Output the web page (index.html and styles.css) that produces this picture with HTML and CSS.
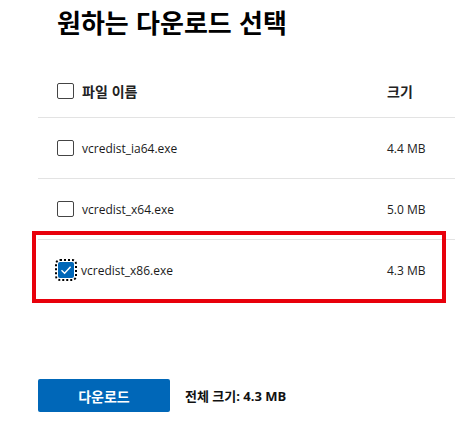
FILE: index.html
```html
<!DOCTYPE html>
<html lang="ko">
<head>
<meta charset="utf-8">
<link rel="stylesheet" href="styles.css">
</head>
<body>
<div class="page">
  <h1 class="title">원하는 다운로드 선택</h1>
  <div class="table">
    <div class="row head">
      <div class="name"><span class="box"></span><span class="label">파일 이름</span></div>
      <div class="size">크기</div>
    </div>
    <div class="row">
      <div class="name"><span class="box"></span><span class="label">vcredist_ia64.exe</span></div>
      <div class="size">4.4 MB</div>
    </div>
    <div class="row">
      <div class="name"><span class="box"></span><span class="label">vcredist_x64.exe</span></div>
      <div class="size">5.0 MB</div>
    </div>
    <div class="row selected">
      <div class="name"><span class="box checked"><svg viewBox="0 0 16 16" width="16" height="16"><path d="M3.5 8.2 L6.6 11.2 L12.6 4.8" fill="none" stroke="#fff" stroke-width="1.4"/></svg></span><span class="label tight">vcredist_x86.exe</span></div>
      <div class="size">4.3 MB</div>
      <div class="highlight"></div>
    </div>
  </div>
  <div class="footer">
    <button class="btn">다운로드</button>
    <span class="total">전체 크기: 4.3 MB</span>
  </div>
</div>
</body>
</html>
```
FILE: styles.css
```css
* { box-sizing: border-box; }
body {
  margin: 0;
  background: #fff;
  font-family: "Open Sans", "Noto Sans CJK KR", sans-serif;
  color: #1a1a1a;
}
.page {
  width: 474px;
  height: 443px;
  padding: 0 19px 0 38px;
}
.title {
  margin: 0;
  padding: 5px 0 0 19px;
  height: 65px;
  font-family: "Noto Sans CJK KR", sans-serif;
  font-size: 26px;
  font-weight: 700;
  line-height: 34px;
  color: #000;
}
.table {
  width: 417px;
}
.row {
  position: relative;
  display: flex;
  align-items: center;
  height: 61px;
  padding-left: 19px;
  border-top: 1px solid #e3e3e3;
  font-size: 12px;
}
.row.head {
  height: 52px;
  border-top: none;
  font-family: "Noto Sans CJK KR", sans-serif;
  font-weight: 700;
  font-size: 14px;
  color: #222;
}
.name {
  display: flex;
  align-items: center;
  width: 330px;
}
.box {
  width: 17px;
  height: 16px;
  border: 1.5px solid #444;
  border-radius: 2px;
  flex: none;
  display: block;
}
.box.checked {
  width: 16px;
  margin-left: 1px;
  background: #0067b8;
  border: none;
  outline: 2px dotted #000;
  outline-offset: 1px;
}
.box svg { display: block; }
.label { margin-left: 8px; }
.label.tight { margin-left: 7px; }
.size { color: #222; }
.highlight {
  position: absolute;
  left: -6px;
  top: -9px;
  width: 414px;
  height: 72px;
  border: 4px solid #e8000b;
}
.footer {
  display: flex;
  align-items: center;
  margin-top: 79px;
}
.btn {
  width: 132px;
  height: 33px;
  border: none;
  border-radius: 2px;
  background: #0067b8;
  color: #fff;
  font-family: "Noto Sans CJK KR", sans-serif;
  font-weight: 700;
  font-size: 14px;
}
.total {
  margin-left: 15px;
  font-family: "Open Sans", "Noto Sans CJK KR", sans-serif;
  font-weight: 700;
  font-size: 13px;
  color: #111;
}
```
